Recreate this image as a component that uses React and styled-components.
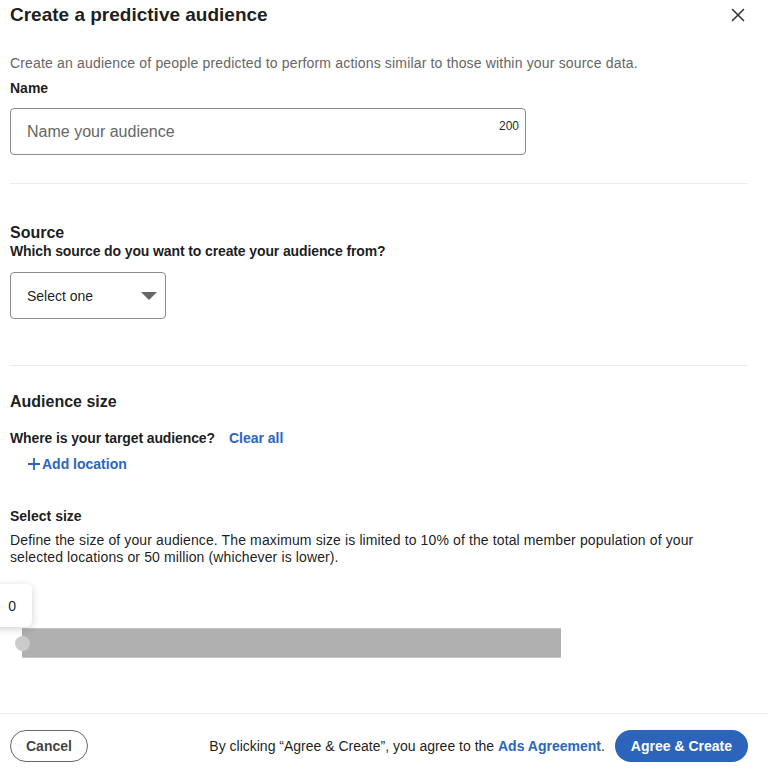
import React, { useState } from "react";
import styled, { createGlobalStyle } from "styled-components";

const GlobalStyle = createGlobalStyle`
  html, body {
    margin: 0;
    padding: 0;
    background: #fff;
  }
  body {
    font-family: "Liberation Sans", Arial, sans-serif;
    color: rgba(0, 0, 0, 0.9);
    overflow: hidden;
  }
  * {
    box-sizing: border-box;
  }
`;

const Modal = styled.div`
  width: 768px;
  height: 773px;
  display: flex;
  flex-direction: column;
  overflow: hidden;
`;

const Body = styled.div`
  flex: 1;
  padding: 0 20px 0 10px;
  display: flex;
  flex-direction: column;
`;

const Header = styled.header`
  display: flex;
  align-items: center;
  justify-content: space-between;
  height: 30px;
  padding-right: 2px;
`;

const Title = styled.h2`
  margin: 0;
  font-size: 19px;
  font-weight: 600;
  line-height: 24px;
  color: rgba(0, 0, 0, 0.9);
`;

const CloseButton = styled.button`
  border: 0;
  background: none;
  padding: 0;
  width: 16px;
  height: 16px;
  display: flex;
  align-items: center;
  justify-content: center;
  cursor: pointer;
  color: rgba(0, 0, 0, 0.8);
`;

const Description = styled.p`
  margin: 23px 0 0;
  font-size: 14px;
  line-height: 20px;
  letter-spacing: 0.17px;
  color: #666;
`;

const Label = styled.div`
  margin-top: ${(p) => p.$top || 0}px;
  font-size: 14px;
  line-height: 20px;
  font-weight: 700;
  color: rgba(0, 0, 0, 0.9);
`;

const SectionTitle = styled.h3`
  margin: ${(p) => p.$top || 0}px 0 0;
  font-size: 16px;
  line-height: 20px;
  font-weight: 600;
  color: rgba(0, 0, 0, 0.9);
`;

const Question = styled.div`
  font-size: 14px;
  line-height: 16px;
  font-weight: 700;
  letter-spacing: -0.12px;
`;

const InputBox = styled.div`
  position: relative;
  margin-top: 10px;
  width: 516px;
  height: 47px;
  border: 1px solid #8c8c8c;
  border-radius: 4px;
  display: flex;
  align-items: center;
  padding: 0 16px;
`;

const TextInput = styled.input`
  border: 0;
  outline: none;
  width: 100%;
  font-family: inherit;
  font-size: 16px;
  color: rgba(0, 0, 0, 0.9);
  background: transparent;
  padding: 0;
  &::placeholder {
    color: #666;
  }
`;

const Counter = styled.span`
  position: absolute;
  top: 10px;
  right: 6px;
  font-size: 12px;
  color: rgba(0, 0, 0, 0.9);
`;

const Divider = styled.hr`
  margin: ${(p) => p.$top}px 0 0;
  border: 0;
  border-top: 1px solid #ebebeb;
  width: 738px;
`;

const SelectBox = styled.button`
  margin-top: 13px;
  width: 156px;
  height: 47px;
  border: 1px solid #8c8c8c;
  border-radius: 4px;
  background: #fff;
  display: flex;
  align-items: center;
  justify-content: space-between;
  padding: 0 8px 0 16px;
  font-family: inherit;
  font-size: 14px;
  color: rgba(0, 0, 0, 0.9);
  cursor: pointer;
`;

const Row = styled.div`
  margin-top: ${(p) => p.$top || 0}px;
  display: flex;
  align-items: center;
  gap: 14px;
`;

const LinkButton = styled.button`
  border: 0;
  background: none;
  padding: 0;
  font-family: inherit;
  font-size: 14px;
  line-height: 20px;
  font-weight: 700;
  color: #2a66c0;
  cursor: pointer;
  display: flex;
  align-items: center;
`;

const AddLocation = styled(LinkButton)`
  margin: 6px 0 0 18px;
  align-self: flex-start;
  gap: 2px;
`;

const Help = styled.p`
  margin: 6px 0 0;
  font-size: 14px;
  line-height: 17px;
  letter-spacing: 0.12px;
  color: rgba(0, 0, 0, 0.9);
  max-width: 710px;
`;

const SliderWrap = styled.div`
  position: relative;
  margin-top: 62px;
  margin-left: 12px;
  width: 539px;
  height: 30px;
`;

const Track = styled.div`
  width: 100%;
  height: 100%;
  background: #b0b0b0;
  border-top: 1px solid #c4c4c4;
  border-bottom: 1px solid #c4c4c4;
`;

const Thumb = styled.div`
  position: absolute;
  left: -7px;
  top: 8px;
  width: 15px;
  height: 15px;
  border-radius: 50%;
  background: #cbcbcb;
`;

const Tooltip = styled.div`
  position: absolute;
  left: -32px;
  bottom: 31px;
  width: 42px;
  height: 43px;
  background: #fff;
  border-radius: 6px;
  box-shadow: 0 2px 8px rgba(0, 0, 0, 0.18);
  display: flex;
  align-items: center;
  justify-content: flex-end;
  padding-right: 16px;
  font-size: 14px;
  color: rgba(0, 0, 0, 0.9);
`;

const Footer = styled.footer`
  border-top: 1px solid #ebebeb;
  height: 60px;
  padding: 16px 20px 0 10px;
  display: flex;
  align-items: flex-start;
  justify-content: space-between;
`;

const Cancel = styled.button`
  height: 32px;
  padding: 0 15px;
  border: 1px solid #666;
  border-radius: 16px;
  background: #fff;
  font-family: inherit;
  font-size: 14px;
  font-weight: 600;
  color: rgba(0, 0, 0, 0.75);
  cursor: pointer;
`;

const FooterRight = styled.div`
  display: flex;
  align-items: center;
  gap: 10px;
  height: 32px;
`;

const Agreement = styled.span`
  font-size: 14px;
  color: rgba(0, 0, 0, 0.9);
  a {
    color: #2a66c0;
    text-decoration: none;
    font-weight: 600;
  }
`;

const Primary = styled.button`
  height: 32px;
  padding: 0 16px;
  border: 0;
  border-radius: 16px;
  background: #2c64bc;
  color: #fff;
  font-family: inherit;
  font-size: 14px;
  font-weight: 700;
  cursor: pointer;
`;

const CloseIcon = () => (
  <svg width="14" height="14" viewBox="0 0 14 14" fill="none">
    <path d="M1.5 1.5l11 11M12.5 1.5l-11 11" stroke="currentColor" strokeWidth="1.6" strokeLinecap="round" />
  </svg>
);

const Caret = () => (
  <svg width="16" height="8" viewBox="0 0 16 8">
    <path d="M0 0h16L8 8z" fill="#666" />
  </svg>
);

const Plus = () => (
  <svg width="12" height="12" viewBox="0 0 12 12">
    <path d="M6 0v12M0 6h12" stroke="#2a66c0" strokeWidth="1.8" />
  </svg>
);

export default function App() {
  const [name, setName] = useState("");

  return (
    <>
      <GlobalStyle />
      <Modal>
        <Body>
          <Header>
            <Title>Create a predictive audience</Title>
            <CloseButton aria-label="Dismiss">
              <CloseIcon />
            </CloseButton>
          </Header>
          <Description>
            Create an audience of people predicted to perform actions similar to those within your source data.
          </Description>
          <Label $top={5}>Name</Label>
          <InputBox>
            <TextInput
              placeholder="Name your audience"
              value={name}
              onChange={(e) => setName(e.target.value)}
            />
            <Counter>{200 - name.length}</Counter>
          </InputBox>
          <Divider $top={28} />

          <SectionTitle $top={39}>Source</SectionTitle>
          <Question>Which source do you want to create your audience from?</Question>
          <SelectBox>
            Select one
            <Caret />
          </SelectBox>
          <Divider $top={46} />

          <SectionTitle $top={26}>Audience size</SectionTitle>
          <Row $top={16}>
            <Question>Where is your target audience?</Question>
            <LinkButton>Clear all</LinkButton>
          </Row>
          <AddLocation>
            <Plus />
            Add location
          </AddLocation>

          <Label $top={32}>Select size</Label>
          <Help>
            Define the size of your audience. The maximum size is limited to 10% of the total member population of your
            selected locations or 50 million (whichever is lower).
          </Help>
          <SliderWrap>
            <Tooltip>0</Tooltip>
            <Track />
            <Thumb />
          </SliderWrap>
        </Body>
        <Footer>
          <Cancel>Cancel</Cancel>
          <FooterRight>
            <Agreement>
              By clicking “Agree &amp; Create”, you agree to the <a href="#">Ads Agreement</a>.
            </Agreement>
            <Primary>Agree &amp; Create</Primary>
          </FooterRight>
        </Footer>
      </Modal>
    </>
  );
}
